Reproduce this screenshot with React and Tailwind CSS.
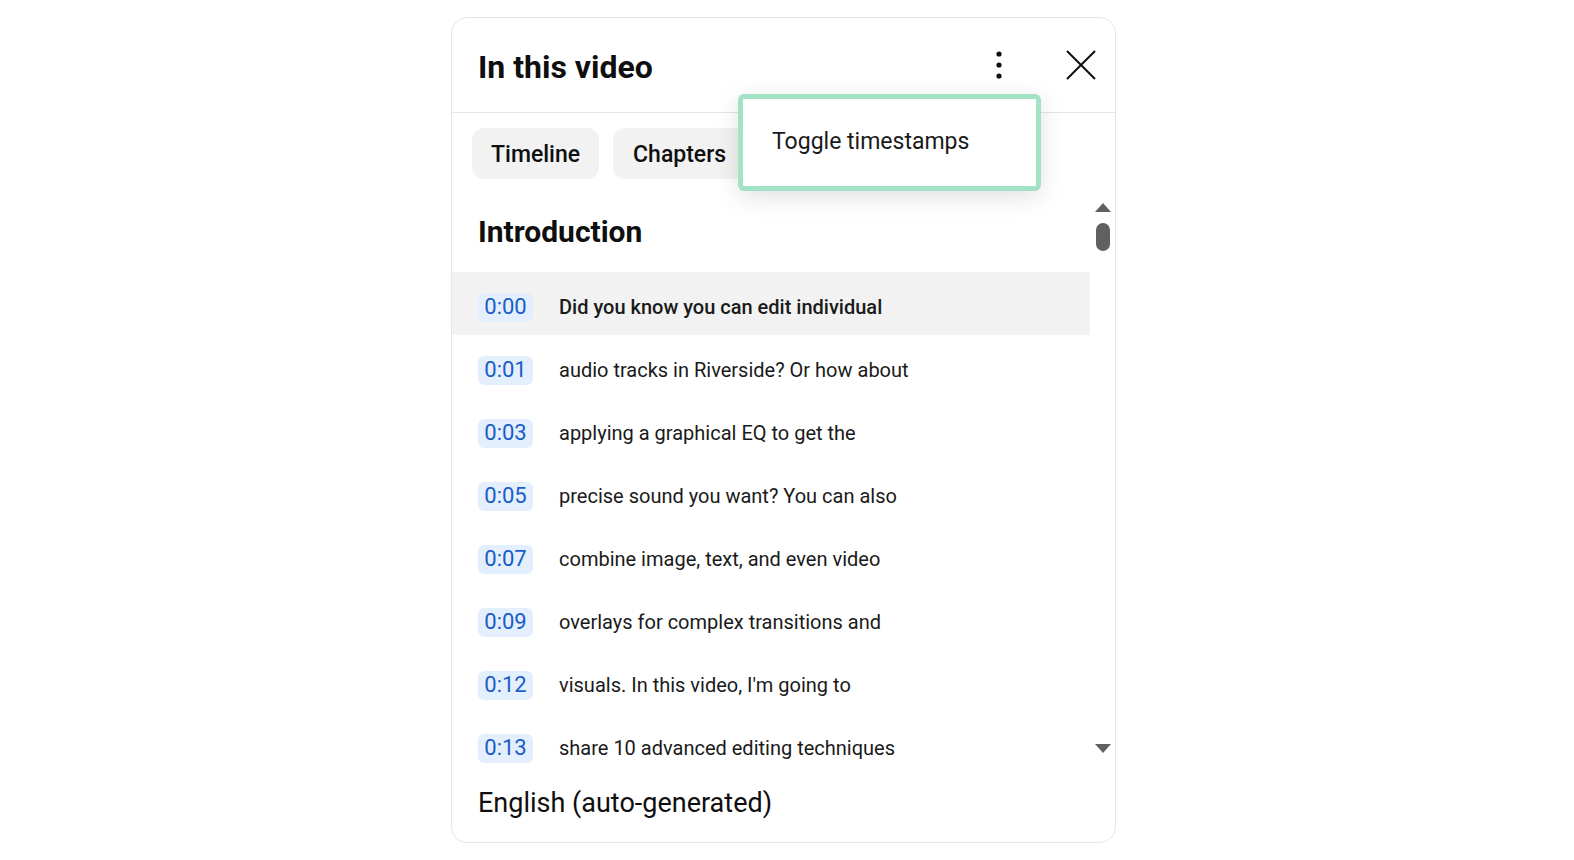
import { useState } from "react";

const rows = [
  ["0:00", "Did you know you can edit individual"],
  ["0:01", "audio tracks in Riverside? Or how about"],
  ["0:03", "applying a graphical EQ to get the"],
  ["0:05", "precise sound you want? You can also"],
  ["0:07", "combine image, text, and even video"],
  ["0:09", "overlays for complex transitions and"],
  ["0:12", "visuals. In this video, I'm going to"],
  ["0:13", "share 10 advanced editing techniques"],
];

function TranscriptRow({ time, text, active }) {
  return (
    <div
      className={
        "h-[63px] flex items-center pl-[26px] pt-[7px] " + (active ? "bg-[#f2f2f2]" : "")
      }
    >
      <span className="w-[55px] h-[29px] flex items-center justify-center rounded-md bg-[#e3effd] text-[#1a5cc8] text-[22px] leading-none">
        {time}
      </span>
      <span
        className={
          "ml-[26px] text-[20px] text-[#1a1a1a] " + (active ? "font-medium" : "")
        }
      >
        {text}
      </span>
    </div>
  );
}

export default function App() {
  const [active] = useState(0);

  return (
    <div className="w-full min-h-screen bg-white flex pl-[451px] pt-[17px] font-['Roboto',sans-serif]">
      <div className="relative w-[665px] h-[826px] border border-[#e5e5e5] rounded-2xl flex flex-col overflow-hidden">
        {/* header */}
        <div className="h-[95px] shrink-0 border-b border-[#e5e5e5] flex items-center pl-[26px] pr-[18px]">
          <h1 className="text-[32px] font-bold text-[#0f0f0f] flex-1 mt-[3px]">
            In this video
          </h1>
          <svg width="8" height="28" viewBox="0 0 8 28" className="mr-[62px]">
            <circle cx="4" cy="3" r="2.6" fill="#0f0f0f" />
            <circle cx="4" cy="14" r="2.6" fill="#0f0f0f" />
            <circle cx="4" cy="25" r="2.6" fill="#0f0f0f" />
          </svg>
          <svg width="32" height="32" viewBox="0 0 32 32">
            <path d="M2 2 L30 30 M30 2 L2 30" stroke="#0f0f0f" strokeWidth="2" />
          </svg>
        </div>

        {/* chips */}
        <div className="flex gap-[14px] pl-[20px] pt-[15px] shrink-0">
          <button className="h-[51px] px-[19px] pt-[3px] rounded-xl bg-[#f2f2f2] text-[23px] font-medium text-[#0f0f0f]">
            Timeline
          </button>
          <button className="h-[51px] px-[20px] pt-[3px] rounded-xl bg-[#f2f2f2] text-[23px] font-medium text-[#0f0f0f]">
            Chapters
          </button>
        </div>

        {/* list + scrollbar */}
        <div className="flex mt-[12px]">
          <div className="flex-1">
            <h2 className="pl-[26px] pt-[24px] pb-[23px] text-[30px] leading-[34px] font-bold text-[#0f0f0f]">
              Introduction
            </h2>
            {rows.map(([t, s], i) => (
              <TranscriptRow key={t} time={t} text={s} active={i === active} />
            ))}
          </div>
          <div className="w-[25px] flex flex-col items-center justify-between pt-[12px] pb-[23px]">
            <div className="flex flex-col items-center">
              <svg width="16" height="9" viewBox="0 0 16 9">
                <path d="M0 9 L8 0 L16 9 Z" fill="#606060" />
              </svg>
              <div className="w-[14px] h-[28px] mt-[11px] rounded-full bg-[#606060]" />
            </div>
            <svg width="16" height="9" viewBox="0 0 16 9">
              <path d="M0 0 L16 0 L8 9 Z" fill="#606060" />
            </svg>
          </div>
        </div>

        {/* footer */}
        <div className="pl-[26px] pt-[7px] text-[27px] text-[#0f0f0f]">
          English (auto-generated)
        </div>

        {/* menu popup */}
        <div className="absolute left-[286px] top-[76px] w-[303px] h-[97px] border-[5px] border-[#a3e2c4] rounded-md bg-white shadow-[0_6px_24px_rgba(0,0,0,0.12)] pl-[29px] pt-[31px]">
          <span className="text-[23px] text-[#1a1a1a] leading-none">Toggle timestamps</span>
        </div>
      </div>
    </div>
  );
}
